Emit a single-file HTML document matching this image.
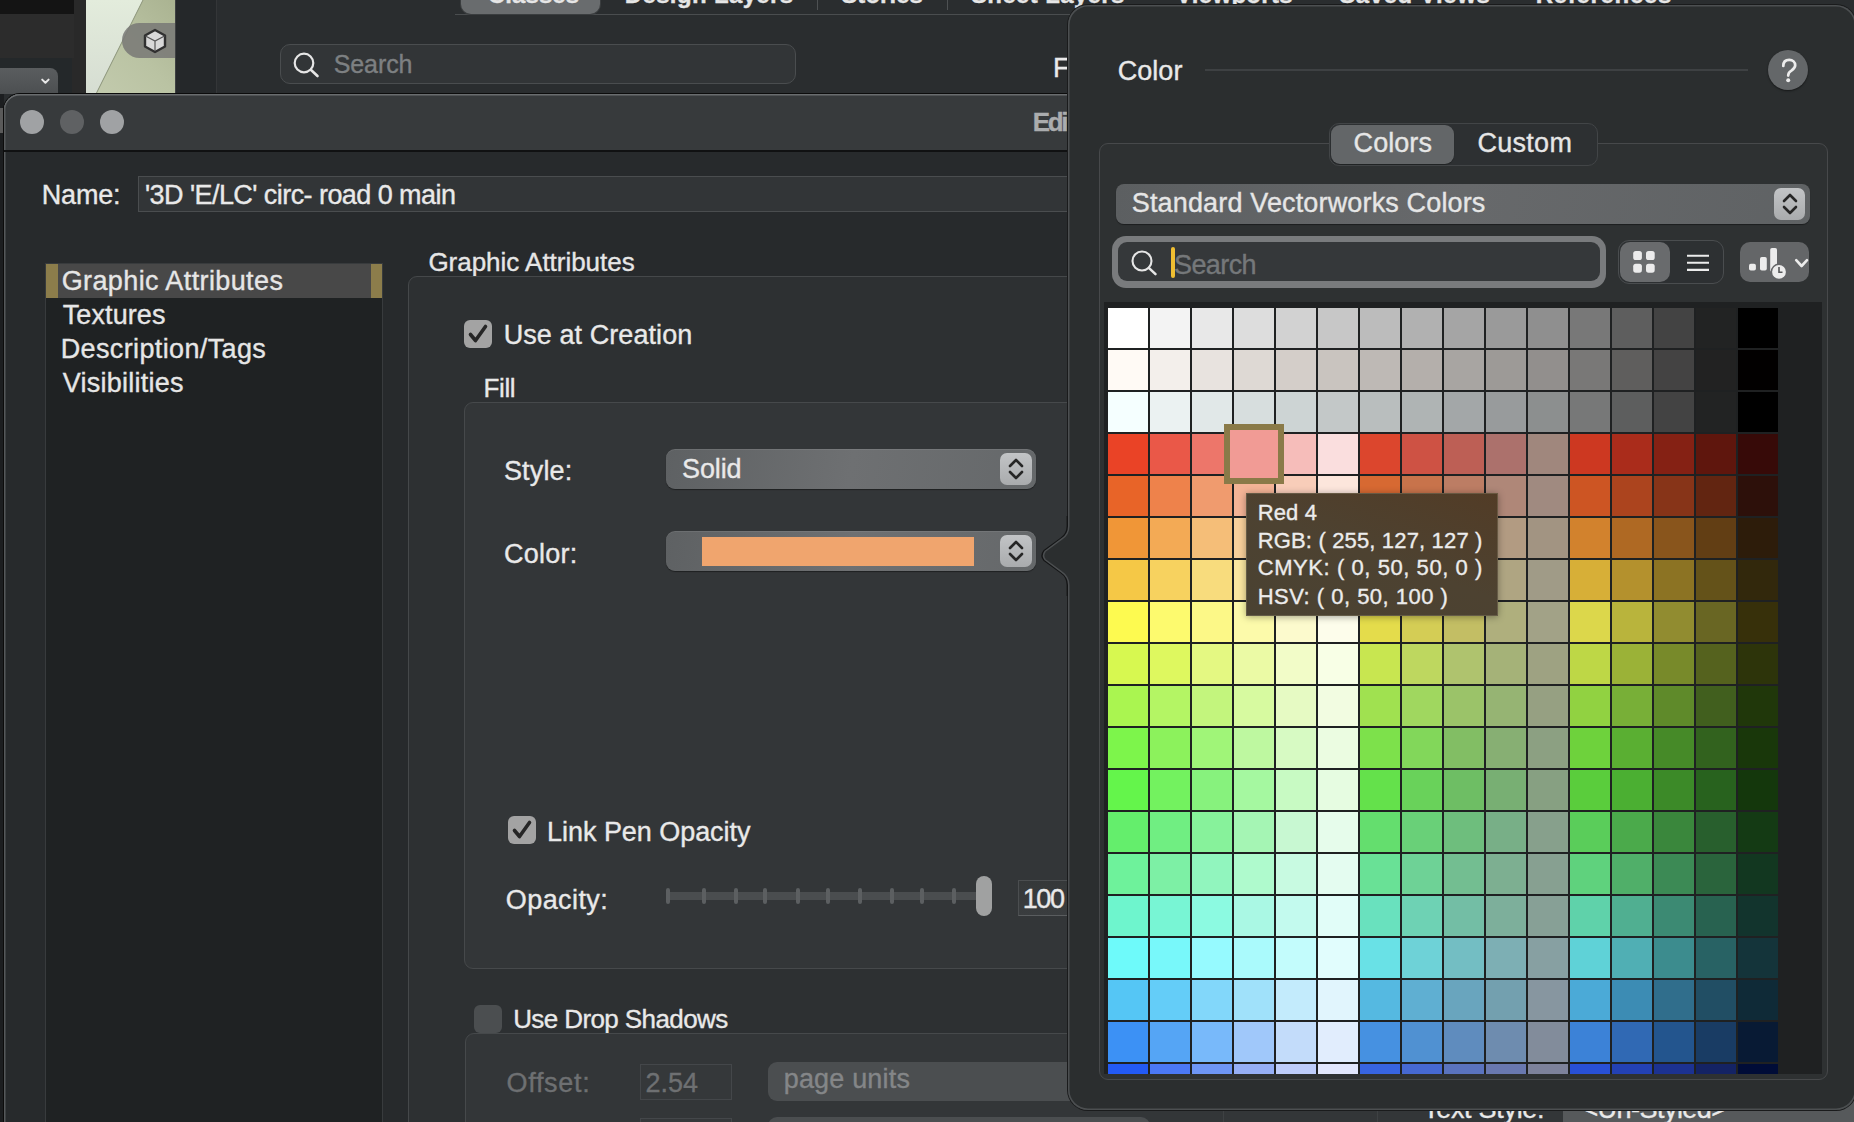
<!DOCTYPE html><html><head><meta charset="utf-8"><style>
html,body{margin:0;padding:0}
body{width:1854px;height:1122px;overflow:hidden;position:relative;background:#2a2d2f;font-family:"Liberation Sans",sans-serif;color:#e1e1e1}
.a{position:absolute}
.t{position:absolute;white-space:nowrap;-webkit-text-stroke:0.35px currentColor}
.grid{position:absolute;left:1104px;top:302px;width:718px;height:772px;background:#1f2122;overflow:hidden}
.grid i{position:absolute;width:40px;display:block}
</style></head><body>
<div class="a" style="left:0.0px;top:0.0px;width:74.0px;height:14.0px;background:#141414"></div>
<div class="a" style="left:0.0px;top:14.0px;width:74.0px;height:44.0px;background:#2c2c2c"></div>
<div class="a" style="left:0.0px;top:58.0px;width:72.0px;height:36.0px;background:#24282a"></div>
<div class="a" style="left:72.0px;top:0.0px;width:14.0px;height:94.0px;background:#292929"></div>
<div class="a" style="left:0.0px;top:0.0px;width:74.0px;height:14.0px;background:#141414"></div>
<div class="a" style="left:0.0px;top:14.0px;width:74.0px;height:44.0px;background:#2c2c2c"></div>
<div class="a" style="left:0.0px;top:68.0px;width:58.0px;height:26.0px;background:linear-gradient(#5a5d5f,#4c4f51);border-radius:0 8px 0 0"></div>
<svg class="a" style="left:38px;top:76px" width="14" height="10"><path d="M4.2 3.6 L7.4 6.8 L10.6 3.6" stroke="#e8e8e8" stroke-width="2" fill="none" stroke-linecap="round" stroke-linejoin="round"/></svg>
<svg class="a" style="left:86px;top:0px" width="89" height="94"><defs><linearGradient id="g1" x1="1" y1="0" x2="0" y2="1"><stop offset="0" stop-color="#aab391"/><stop offset="0.5" stop-color="#bac3a3"/><stop offset="1" stop-color="#c3cbae"/></linearGradient><linearGradient id="g2" x1="0" y1="0" x2="0" y2="1"><stop offset="0" stop-color="#e3ecdc"/><stop offset="1" stop-color="#d6ddd2"/></linearGradient></defs><rect width="89" height="94" fill="url(#g1)"/><polygon points="0,0 57,0 10,94 0,94" fill="url(#g2)"/><line x1="57" y1="0" x2="10" y2="94" stroke="#8a9378" stroke-width="1"/></svg>
<div class="a" style="left:122.0px;top:23.0px;width:60.0px;height:35.0px;background:rgba(120,120,118,0.85);border-radius:18px 0 0 18px"></div>
<svg class="a" style="left:143px;top:28px" width="24" height="26"><polygon points="12,2 22,7.5 22,18.5 12,24 2,18.5 2,7.5" fill="#d8d8d8" stroke="#303030" stroke-width="2.4" stroke-linejoin="round"/><path d="M2.5 8 L12 13 L21.5 8 M12 13 L12 23" stroke="#555" stroke-width="1.2" fill="none"/></svg>
<div class="a" style="left:175.0px;top:0.0px;width:1.0px;height:94.0px;background:#3e4042"></div>
<div class="a" style="left:176.0px;top:0.0px;width:40.0px;height:94.0px;background:#25282a"></div>
<div class="a" style="left:216.0px;top:0.0px;width:1.0px;height:94.0px;background:#343638"></div>
<div class="a" style="left:455.0px;top:14.0px;width:1400.0px;height:1.0px;background:#4a4d4f"></div>
<div class="a" style="left:461.0px;top:-12.0px;width:139.0px;height:26.0px;background:#696c6e;border-radius:0 0 10px 10px;box-shadow:0 0 0 1px #3a3d3f"></div>
<div class="t" style="left:487.8px;top:-17.1px;font-size:24.0px;line-height:24.0px;color:#e6e6e6;font-weight:bold;letter-spacing:0.10px;">Classes</div>
<div class="t" style="left:624.8px;top:-17.1px;font-size:24.0px;line-height:24.0px;color:#e6e6e6;font-weight:bold;letter-spacing:0.35px;">Design Layers</div>
<div class="t" style="left:841.3px;top:-17.1px;font-size:24.0px;line-height:24.0px;color:#e6e6e6;font-weight:bold;letter-spacing:0.05px;">Stories</div>
<div class="t" style="left:971.0px;top:-17.1px;font-size:24.0px;line-height:24.0px;color:#e6e6e6;font-weight:bold;letter-spacing:0.36px;">Sheet Layers</div>
<div class="t" style="left:1175.9px;top:-17.1px;font-size:24.0px;line-height:24.0px;color:#e6e6e6;font-weight:bold;letter-spacing:0.31px;">Viewports</div>
<div class="t" style="left:1339.3px;top:-17.1px;font-size:24.0px;line-height:24.0px;color:#e6e6e6;font-weight:bold;letter-spacing:0.55px;">Saved Views</div>
<div class="t" style="left:1535.7px;top:-17.1px;font-size:24.0px;line-height:24.0px;color:#e6e6e6;font-weight:bold;letter-spacing:0.70px;">References</div>
<div class="a" style="left:817.0px;top:0.0px;width:1.0px;height:10.0px;background:#4e5153"></div>
<div class="a" style="left:947.0px;top:0.0px;width:1.0px;height:10.0px;background:#4e5153"></div>
<div class="a" style="left:280.0px;top:44.0px;width:516.0px;height:40.0px;background:#323537;border:1px solid #4a4d4f;border-radius:10px;box-sizing:border-box"></div>
<svg class="a" style="left:290px;top:49px" width="32" height="32"><circle cx="14" cy="14" r="9.3" stroke="#e6e6e6" stroke-width="2.2" fill="none"/><line x1="20.8" y1="20.8" x2="27.5" y2="27" stroke="#e6e6e6" stroke-width="2.6" stroke-linecap="round"/></svg>
<div class="t" style="left:333.7px;top:51.8px;font-size:25.0px;line-height:25.0px;color:#7d8082;font-weight:normal;letter-spacing:-0.08px;">Search</div>
<div class="t" style="left:1053.0px;top:54.5px;font-size:27.0px;line-height:27.0px;color:#e9e9e9;font-weight:normal;">F</div>
<div class="a" style="left:0.0px;top:94.0px;width:4.0px;height:1028.0px;background:#1c1e20"></div>
<div class="a" style="left:0.0px;top:108.0px;width:3.5px;height:25.0px;background:#5a5a5a"></div>
<div class="a" style="left:3.0px;top:93.0px;width:1900.0px;height:1100.0px;background:#0c0c0c;border-radius:17px 0 0 0"></div>
<div class="a" style="left:4.0px;top:94.0px;width:1900.0px;height:1100.0px;background:#272a2c;border-radius:16px 0 0 0;box-shadow:inset 0 1px 0 #5a5d5f, inset 1.5px 0 0 #55585a"></div>
<div class="a" style="left:4.0px;top:94.0px;width:1900.0px;height:56.0px;background:#373a3c;border-radius:16px 0 0 0;box-shadow:inset 0 1.5px 0 #6a6d6f, inset 1.5px 0 0 #55585a"></div>
<div class="a" style="left:4.0px;top:150.0px;width:1900.0px;height:2.0px;background:#101112"></div>
<div class="a" style="left:20.0px;top:110.0px;width:24.0px;height:24.0px;background:#a0a2a4;border-radius:50%"></div>
<div class="a" style="left:60.0px;top:110.0px;width:24.0px;height:24.0px;background:#5f6163;border-radius:50%"></div>
<div class="a" style="left:100.0px;top:110.0px;width:24.0px;height:24.0px;background:#a0a2a4;border-radius:50%"></div>
<div class="t" style="left:1032.7px;top:109.0px;font-size:26.0px;line-height:26.0px;color:#aaacae;font-weight:bold;letter-spacing:-2.35px;">Edi</div>
<div class="t" style="left:41.8px;top:181.9px;font-size:27.0px;line-height:27.0px;color:#e9e9e9;font-weight:normal;letter-spacing:-0.19px;">Name:</div>
<div class="a" style="left:138.0px;top:176.0px;width:1000.0px;height:36.0px;background:#323537;border:1px solid #4a4d4f;box-sizing:border-box"></div>
<div class="t" style="left:145.0px;top:181.9px;font-size:27.0px;line-height:27.0px;color:#e9e9e9;font-weight:normal;letter-spacing:-0.56px;">'3D 'E/LC' circ- road 0 main</div>
<div class="a" style="left:45.0px;top:263.0px;width:338.0px;height:900.0px;background:#1f2223;border:1px solid #383b3d;box-sizing:border-box"></div>
<div class="a" style="left:46.0px;top:264.0px;width:336.0px;height:34.0px;background:#484848"></div>
<div class="a" style="left:46.0px;top:264.0px;width:12.0px;height:34.0px;background:#8c7d4b"></div>
<div class="a" style="left:371.0px;top:264.0px;width:11.0px;height:34.0px;background:#8c7d4b"></div>
<div class="t" style="left:61.7px;top:268.4px;font-size:27.0px;line-height:27.0px;color:#e6e6e6;font-weight:normal;letter-spacing:0.39px;">Graphic Attributes</div>
<div class="t" style="left:62.7px;top:302.3px;font-size:27.0px;line-height:27.0px;color:#e6e6e6;font-weight:normal;letter-spacing:0.11px;">Textures</div>
<div class="t" style="left:60.7px;top:336.2px;font-size:27.0px;line-height:27.0px;color:#e6e6e6;font-weight:normal;letter-spacing:0.37px;">Description/Tags</div>
<div class="t" style="left:62.7px;top:370.1px;font-size:27.0px;line-height:27.0px;color:#e6e6e6;font-weight:normal;letter-spacing:0.25px;">Visibilities</div>
<div class="t" style="left:428.4px;top:249.2px;font-size:26.0px;line-height:26.0px;color:#e6e6e6;font-weight:normal;letter-spacing:-0.02px;">Graphic Attributes</div>
<div class="a" style="left:408.0px;top:276.0px;width:1200.0px;height:900.0px;background:#2d3032;border:1px solid #45484a;border-radius:9px;box-sizing:border-box"></div>
<div class="a" style="left:464.0px;top:320.0px;width:28.0px;height:28.0px;background:#a3a3a3;border-radius:6px"></div><svg class="a" style="left:464px;top:320px" width="28" height="28"><path d="M6.5 14.5 L11.5 20.5 L21.5 6.5" stroke="#262626" stroke-width="3.6" fill="none" stroke-linecap="round" stroke-linejoin="round"/></svg>
<div class="t" style="left:503.7px;top:322.4px;font-size:27.0px;line-height:27.0px;color:#e9e9e9;font-weight:normal;letter-spacing:0.07px;">Use at Creation</div>
<div class="t" style="left:483.6px;top:374.8px;font-size:26.0px;line-height:26.0px;color:#e9e9e9;font-weight:normal;letter-spacing:-0.40px;">Fill</div>
<div class="a" style="left:464.0px;top:402.0px;width:1200.0px;height:567.0px;background:#333638;border:1px solid #46494b;border-radius:9px;box-sizing:border-box"></div>
<div class="t" style="left:503.9px;top:458.4px;font-size:27.0px;line-height:27.0px;color:#e9e9e9;font-weight:normal;letter-spacing:0.18px;">Style:</div>
<div class="a" style="left:666.0px;top:449.0px;width:370.0px;height:40.0px;background:linear-gradient(100deg,#5e6163,#6e7072 50%,#65686a);border-radius:9px;box-shadow:0 1px 1px rgba(0,0,0,.4), inset 0 1px 0 rgba(255,255,255,.08)"></div><div class="a" style="left:1000.0px;top:453.0px;width:32.0px;height:32.0px;background:linear-gradient(#c2c4c6,#a9abad);border-radius:7px"></div><svg class="a" style="left:1000px;top:453px" width="32" height="32"><path d="M10 13 L16 7 L22 13 M10 19 L16 25 L22 19" stroke="#262626" stroke-width="2.6" fill="none" stroke-linecap="round" stroke-linejoin="round"/></svg>
<div class="t" style="left:682.0px;top:455.5px;font-size:27.0px;line-height:27.0px;color:#e9e9e9;font-weight:normal;letter-spacing:-0.12px;">Solid</div>
<div class="t" style="left:503.9px;top:540.5px;font-size:27.0px;line-height:27.0px;color:#e9e9e9;font-weight:normal;letter-spacing:0.26px;">Color:</div>
<div class="a" style="left:666.0px;top:531.0px;width:370.0px;height:40.0px;background:linear-gradient(100deg,#5e6163,#6e7072 50%,#65686a);border-radius:9px;box-shadow:0 1px 1px rgba(0,0,0,.4), inset 0 1px 0 rgba(255,255,255,.08)"></div><div class="a" style="left:1000.0px;top:535.0px;width:32.0px;height:32.0px;background:linear-gradient(#c2c4c6,#a9abad);border-radius:7px"></div><svg class="a" style="left:1000px;top:535px" width="32" height="32"><path d="M10 13 L16 7 L22 13 M10 19 L16 25 L22 19" stroke="#262626" stroke-width="2.6" fill="none" stroke-linecap="round" stroke-linejoin="round"/></svg>
<div class="a" style="left:702.0px;top:536.5px;width:272.0px;height:29.0px;background:#f0a56e"></div>
<div class="a" style="left:508.0px;top:816.0px;width:28.0px;height:28.0px;background:#a3a3a3;border-radius:6px"></div><svg class="a" style="left:508px;top:816px" width="28" height="28"><path d="M6.5 14.5 L11.5 20.5 L21.5 6.5" stroke="#262626" stroke-width="3.6" fill="none" stroke-linecap="round" stroke-linejoin="round"/></svg>
<div class="t" style="left:547.1px;top:818.5px;font-size:27.0px;line-height:27.0px;color:#e9e9e9;font-weight:normal;letter-spacing:-0.05px;">Link Pen Opacity</div>
<div class="t" style="left:505.8px;top:886.5px;font-size:27.0px;line-height:27.0px;color:#e9e9e9;font-weight:normal;letter-spacing:0.41px;">Opacity:</div>
<div class="a" style="left:666.0px;top:892.3px;width:318.0px;height:7.6px;background:#4a4d4f;border-radius:4px"></div>
<div class="a" style="left:666.0px;top:888.2px;width:4.0px;height:15.8px;background:#5c5f61;border-radius:2px"></div>
<div class="a" style="left:702.0px;top:888.2px;width:4.0px;height:15.8px;background:#5c5f61;border-radius:2px"></div>
<div class="a" style="left:734.0px;top:888.2px;width:4.0px;height:15.8px;background:#5c5f61;border-radius:2px"></div>
<div class="a" style="left:763.4px;top:888.2px;width:4.0px;height:15.8px;background:#5c5f61;border-radius:2px"></div>
<div class="a" style="left:795.5px;top:888.2px;width:4.0px;height:15.8px;background:#5c5f61;border-radius:2px"></div>
<div class="a" style="left:825.7px;top:888.2px;width:4.0px;height:15.8px;background:#5c5f61;border-radius:2px"></div>
<div class="a" style="left:857.8px;top:888.2px;width:4.0px;height:15.8px;background:#5c5f61;border-radius:2px"></div>
<div class="a" style="left:889.9px;top:888.2px;width:4.0px;height:15.8px;background:#5c5f61;border-radius:2px"></div>
<div class="a" style="left:919.7px;top:888.2px;width:4.0px;height:15.8px;background:#5c5f61;border-radius:2px"></div>
<div class="a" style="left:951.8px;top:888.2px;width:4.0px;height:15.8px;background:#5c5f61;border-radius:2px"></div>
<div class="a" style="left:975.8px;top:875.8px;width:16.3px;height:40.3px;background:#a0a1a1;border-radius:8px"></div>
<div class="a" style="left:1018.0px;top:880.4px;width:60.0px;height:35.4px;background:linear-gradient(#353839,#3a3d3f);border:1px solid #4b4e50;border-bottom-color:#5a5d5f;box-sizing:border-box"></div>
<div class="t" style="left:1022.7px;top:886.1px;font-size:27.0px;line-height:27.0px;color:#e9e9e9;font-weight:normal;letter-spacing:-1.35px;">100</div>
<div class="a" style="left:474.4px;top:1004.6px;width:28.0px;height:28.0px;background:#4b4e50;border-radius:6px"></div>
<div class="t" style="left:513.2px;top:1006.1px;font-size:26.0px;line-height:26.0px;color:#e9e9e9;font-weight:normal;letter-spacing:-0.60px;">Use Drop Shadows</div>
<div class="a" style="left:465.0px;top:1033.0px;width:1200.0px;height:200.0px;background:#333638;border:1px solid #46494b;border-radius:9px;box-sizing:border-box"></div>
<div class="t" style="left:506.6px;top:1070.1px;font-size:27.0px;line-height:27.0px;color:#6e7072;font-weight:normal;letter-spacing:0.67px;">Offset:</div>
<div class="a" style="left:640.0px;top:1064.0px;width:92.0px;height:36.0px;background:#35383a;border:1px solid #44474a;box-sizing:border-box"></div>
<div class="t" style="left:645.5px;top:1070.1px;font-size:27.0px;line-height:27.0px;color:#6e7072;font-weight:normal;">2.54</div>
<div class="a" style="left:768.0px;top:1061.5px;width:382.0px;height:39.0px;background:#4b4e50;border-radius:9px"></div>
<div class="t" style="left:783.7px;top:1066.1px;font-size:27.0px;line-height:27.0px;color:#848688;font-weight:normal;letter-spacing:0.18px;">page units</div>
<div class="a" style="left:640.0px;top:1118.0px;width:92.0px;height:36.0px;background:#35383a;border:1px solid #44474a;box-sizing:border-box"></div>
<div class="a" style="left:768.0px;top:1117.0px;width:382.0px;height:39.0px;background:#4b4e50;border-radius:9px"></div>
<div class="a" style="left:1223.0px;top:1100.0px;width:1.0px;height:30.0px;background:#3e4143"></div>
<div class="a" style="left:1377.0px;top:1100.0px;width:1.0px;height:30.0px;background:#3e4143"></div>
<div class="t" style="left:1423.0px;top:1095.6px;font-size:27.0px;line-height:27.0px;color:#e9e9e9;font-weight:normal;letter-spacing:-0.30px;">Text Style:</div>
<div class="a" style="left:1563.0px;top:1098.0px;width:400.0px;height:40.0px;background:#56595b;border-radius:9px"></div>
<div class="t" style="left:1582.4px;top:1095.6px;font-size:27.0px;line-height:27.0px;color:#e9e9e9;font-weight:normal;letter-spacing:-0.54px;">&lt;Un-Styled&gt;</div>
<div class="a" style="left:1067.0px;top:4.0px;width:790.0px;height:1107.0px;background:#1a1b1c;border-radius:21px"></div>
<div class="a" style="left:1068.0px;top:5.0px;width:788.0px;height:1105.0px;background:#2b2e2f;border-radius:20px;box-shadow:inset 0 0 0 1.5px #4c4f51"></div>
<svg class="a" style="left:1038px;top:516px" width="36" height="80"><path d="M29.6 0 L29.6 10 Q29.6 18 23.1 22.5 L6.1 35 Q2.6 39.5 6.1 44 L23.1 56.5 Q29.6 61 29.6 69 L29.6 80 L36 80 L36 0 Z" fill="#2b2e2f" stroke="none"/><path d="M29.6 0 L29.6 10 Q29.6 18 23.1 22.5 L6.1 35 Q2.6 39.5 6.1 44 L23.1 56.5 Q29.6 61 29.6 69 L29.6 80" fill="none" stroke="#141516" stroke-width="2"/><path d="M30.75 0 L30.75 10 Q30.75 18.2 24.2 22.7 L7.2 35.2 Q3.9 39.5 7.2 43.8 L24.2 56.3 Q30.75 60.8 30.75 69 L30.75 80" fill="none" stroke="#4c4f51" stroke-width="1.5"/></svg>
<div class="t" style="left:1117.7px;top:58.2px;font-size:27.0px;line-height:27.0px;color:#e9e9e9;font-weight:normal;letter-spacing:0.05px;">Color</div>
<div class="a" style="left:1205.0px;top:69.0px;width:543.0px;height:1.5px;background:#3e4143"></div>
<div class="a" style="left:1768.0px;top:50.0px;width:40.0px;height:40.0px;background:#646769;border-radius:50%;box-shadow:0 1px 2px rgba(0,0,0,.5)"></div>
<svg class="a" style="left:1768px;top:50px" width="40" height="40"><path d="M15.3 16 C15.3 12 17.8 9.9 21.2 9.9 C24.8 9.9 27.2 12.3 27.2 15.3 C27.2 18.3 25 19.5 23 20.8 C21 22 20.2 23 20.2 25.6" stroke="#ececec" stroke-width="2.7" fill="none" stroke-linecap="round"/><circle cx="20.2" cy="30.2" r="2" fill="#ececec"/></svg>
<div class="a" style="left:1098.5px;top:142.5px;width:729.0px;height:937.0px;background:#2e3132;border:1.5px solid #47494b;border-radius:9px;box-sizing:border-box"></div>
<div class="a" style="left:1329.0px;top:123.0px;width:268.5px;height:43.0px;background:#2d3032;border:1px solid #424547;border-radius:10px;box-sizing:border-box"></div>
<div class="a" style="left:1330.7px;top:124.6px;width:123.3px;height:39.4px;background:#636668;border-radius:9px;box-shadow:0 1px 1px rgba(0,0,0,.3)"></div>
<div class="t" style="left:1353.6px;top:130.1px;font-size:27.0px;line-height:27.0px;color:#e6e6e6;font-weight:normal;letter-spacing:0.06px;">Colors</div>
<div class="t" style="left:1477.4px;top:130.1px;font-size:27.0px;line-height:27.0px;color:#e6e6e6;font-weight:normal;letter-spacing:0.30px;">Custom</div>
<div class="a" style="left:1116.0px;top:184.0px;width:694.0px;height:39.6px;background:linear-gradient(100deg,#5c5f61,#67696b 50%,#5f6264);border-radius:8px;box-shadow:0 1px 1px rgba(0,0,0,.4)"></div>
<div class="a" style="left:1774.3px;top:188.4px;width:31.0px;height:31.7px;background:linear-gradient(#c2c4c6,#a9abad);border-radius:7px"></div>
<svg class="a" style="left:1774px;top:188px" width="32" height="32"><path d="M10 13 L16 7 L22 13 M10 19 L16 25 L22 19" stroke="#262626" stroke-width="2.6" fill="none" stroke-linecap="round" stroke-linejoin="round"/></svg>
<div class="t" style="left:1131.8px;top:190.1px;font-size:27.0px;line-height:27.0px;color:#e6e6e6;font-weight:normal;letter-spacing:0.15px;">Standard Vectorworks Colors</div>
<div class="a" style="left:1112.0px;top:236.4px;width:494.0px;height:51.3px;background:#797b7d;border-radius:14px"></div>
<div class="a" style="left:1118.0px;top:242.3px;width:482.0px;height:39.2px;background:#35383a;border-radius:9px"></div>
<svg class="a" style="left:1128px;top:246px" width="32" height="32"><circle cx="14" cy="15" r="9.5" stroke="#e6e6e6" stroke-width="2.1" fill="none"/><line x1="20.8" y1="21.8" x2="27.5" y2="28.2" stroke="#e6e6e6" stroke-width="2.5" stroke-linecap="round"/></svg>
<div class="a" style="left:1171.0px;top:246.8px;width:3.5px;height:31.2px;background:#f0bf32;border-radius:2px"></div>
<div class="t" style="left:1174.0px;top:251.6px;font-size:27.0px;line-height:27.0px;color:#75787a;font-weight:normal;letter-spacing:-0.60px;">Search</div>
<div class="a" style="left:1618.2px;top:240.0px;width:105.6px;height:43.8px;background:#2d3032;border:1px solid #4a4d4f;border-radius:11px;box-sizing:border-box"></div>
<div class="a" style="left:1619.6px;top:241.9px;width:50.4px;height:40.4px;background:#696b6d;border-radius:10px"></div>
<svg class="a" style="left:1630px;top:248px" width="28" height="28"><rect x="3.2" y="3" width="8.7" height="9" rx="2.6" fill="#ececec"/><rect x="16" y="3" width="8.7" height="9" rx="2.6" fill="#ececec"/><rect x="3.2" y="15.7" width="8.7" height="9" rx="2.6" fill="#ececec"/><rect x="16" y="15.7" width="8.7" height="9" rx="2.6" fill="#ececec"/></svg>
<svg class="a" style="left:1684px;top:248px" width="28" height="28"><path d="M3 7.8 H25 M3 14.8 H25 M3 21.9 H25" stroke="#ececec" stroke-width="2.1"/></svg>
<div class="a" style="left:1740.2px;top:241.9px;width:69.3px;height:40.2px;background:#646668;border-radius:10px"></div>
<svg class="a" style="left:1740px;top:240px" width="70" height="44"><rect x="9" y="23.7" width="6.9" height="6.8" rx="1.8" fill="#ececec"/><rect x="20" y="17" width="6.8" height="13.5" rx="1.8" fill="#ececec"/><rect x="30.2" y="7.9" width="6.8" height="24" rx="1.8" fill="#ececec"/><circle cx="39" cy="31.9" r="8.3" fill="#646668"/><circle cx="39" cy="31.9" r="6.9" fill="#ececec"/><path d="M39 27 V32.3 H42.5" stroke="#555759" stroke-width="1.6" fill="none"/><path d="M56.2 20.2 L61.6 26 L67 20.2" stroke="#ececec" stroke-width="2.6" fill="none" stroke-linecap="round" stroke-linejoin="round"/></svg>
<div class="grid"><i style="left:4px;top:6px;height:40px;background:#ffffff"></i>
<i style="left:46px;top:6px;height:40px;background:#f3f3f3"></i>
<i style="left:88px;top:6px;height:40px;background:#e8e8e8"></i>
<i style="left:130px;top:6px;height:40px;background:#dddddd"></i>
<i style="left:172px;top:6px;height:40px;background:#d2d2d2"></i>
<i style="left:214px;top:6px;height:40px;background:#c7c7c7"></i>
<i style="left:256px;top:6px;height:40px;background:#bcbcbc"></i>
<i style="left:298px;top:6px;height:40px;background:#b1b1b1"></i>
<i style="left:340px;top:6px;height:40px;background:#a5a5a5"></i>
<i style="left:382px;top:6px;height:40px;background:#9a9a9a"></i>
<i style="left:424px;top:6px;height:40px;background:#8f8f8f"></i>
<i style="left:466px;top:6px;height:40px;background:#787878"></i>
<i style="left:508px;top:6px;height:40px;background:#5e5e5e"></i>
<i style="left:550px;top:6px;height:40px;background:#434343"></i>
<i style="left:592px;top:6px;height:40px;background:#222323"></i>
<i style="left:634px;top:6px;height:40px;background:#000000"></i>
<i style="left:4px;top:48px;height:40px;background:#fffaf5"></i>
<i style="left:46px;top:48px;height:40px;background:#f3efeb"></i>
<i style="left:88px;top:48px;height:40px;background:#e8e3df"></i>
<i style="left:130px;top:48px;height:40px;background:#ded9d4"></i>
<i style="left:172px;top:48px;height:40px;background:#d4cec9"></i>
<i style="left:214px;top:48px;height:40px;background:#c9c4bf"></i>
<i style="left:256px;top:48px;height:40px;background:#beb9b5"></i>
<i style="left:298px;top:48px;height:40px;background:#b4afab"></i>
<i style="left:340px;top:48px;height:40px;background:#a8a5a2"></i>
<i style="left:382px;top:48px;height:40px;background:#9d9a97"></i>
<i style="left:424px;top:48px;height:40px;background:#928f8d"></i>
<i style="left:466px;top:48px;height:40px;background:#797877"></i>
<i style="left:508px;top:48px;height:40px;background:#5f5e5d"></i>
<i style="left:550px;top:48px;height:40px;background:#444343"></i>
<i style="left:592px;top:48px;height:40px;background:#222222"></i>
<i style="left:634px;top:48px;height:40px;background:#020000"></i>
<i style="left:4px;top:90px;height:40px;background:#f5ffff"></i>
<i style="left:46px;top:90px;height:40px;background:#ebf2f2"></i>
<i style="left:88px;top:90px;height:40px;background:#e1e8e8"></i>
<i style="left:130px;top:90px;height:40px;background:#d7dede"></i>
<i style="left:172px;top:90px;height:40px;background:#cdd4d4"></i>
<i style="left:214px;top:90px;height:40px;background:#c3c8c8"></i>
<i style="left:256px;top:90px;height:40px;background:#b9bebe"></i>
<i style="left:298px;top:90px;height:40px;background:#afb4b4"></i>
<i style="left:340px;top:90px;height:40px;background:#a3a7a8"></i>
<i style="left:382px;top:90px;height:40px;background:#989b9c"></i>
<i style="left:424px;top:90px;height:40px;background:#8c8f8f"></i>
<i style="left:466px;top:90px;height:40px;background:#777878"></i>
<i style="left:508px;top:90px;height:40px;background:#5d5e5e"></i>
<i style="left:550px;top:90px;height:40px;background:#434343"></i>
<i style="left:592px;top:90px;height:40px;background:#222323"></i>
<i style="left:634px;top:90px;height:40px;background:#000000"></i>
<i style="left:4px;top:132px;height:40px;background:#ea4326"></i>
<i style="left:46px;top:132px;height:40px;background:#ea5848"></i>
<i style="left:88px;top:132px;height:40px;background:#ed766a"></i>
<i style="left:130px;top:132px;height:40px;background:#f19b95"></i>
<i style="left:172px;top:132px;height:40px;background:#f6bdba"></i>
<i style="left:214px;top:132px;height:40px;background:#fadede"></i>
<i style="left:256px;top:132px;height:40px;background:#dc462d"></i>
<i style="left:298px;top:132px;height:40px;background:#ce5244"></i>
<i style="left:340px;top:132px;height:40px;background:#bd5f55"></i>
<i style="left:382px;top:132px;height:40px;background:#ac716c"></i>
<i style="left:424px;top:132px;height:40px;background:#a0877d"></i>
<i style="left:466px;top:132px;height:40px;background:#cd3821"></i>
<i style="left:508px;top:132px;height:40px;background:#aa2c1b"></i>
<i style="left:550px;top:132px;height:40px;background:#852114"></i>
<i style="left:592px;top:132px;height:40px;background:#5f160d"></i>
<i style="left:634px;top:132px;height:40px;background:#370a08"></i>
<i style="left:4px;top:174px;height:40px;background:#e86428"></i>
<i style="left:46px;top:174px;height:40px;background:#ee824b"></i>
<i style="left:88px;top:174px;height:40px;background:#f09b6e"></i>
<i style="left:130px;top:174px;height:40px;background:#f4b496"></i>
<i style="left:172px;top:174px;height:40px;background:#f8cdb9"></i>
<i style="left:214px;top:174px;height:40px;background:#fce6dc"></i>
<i style="left:256px;top:174px;height:40px;background:#d76932"></i>
<i style="left:298px;top:174px;height:40px;background:#c8734b"></i>
<i style="left:340px;top:174px;height:40px;background:#bc7d64"></i>
<i style="left:382px;top:174px;height:40px;background:#af8778"></i>
<i style="left:424px;top:174px;height:40px;background:#a08a80"></i>
<i style="left:466px;top:174px;height:40px;background:#cd5523"></i>
<i style="left:508px;top:174px;height:40px;background:#ac441e"></i>
<i style="left:550px;top:174px;height:40px;background:#873418"></i>
<i style="left:592px;top:174px;height:40px;background:#622511"></i>
<i style="left:634px;top:174px;height:40px;background:#2d100a"></i>
<i style="left:4px;top:216px;height:40px;background:#f09637"></i>
<i style="left:46px;top:216px;height:40px;background:#f3aa55"></i>
<i style="left:88px;top:216px;height:40px;background:#f5be78"></i>
<i style="left:130px;top:216px;height:40px;background:#f8d09b"></i>
<i style="left:172px;top:216px;height:40px;background:#fae1be"></i>
<i style="left:214px;top:216px;height:40px;background:#fcf0e1"></i>
<i style="left:256px;top:216px;height:40px;background:#dc9646"></i>
<i style="left:298px;top:216px;height:40px;background:#cd9b5a"></i>
<i style="left:340px;top:216px;height:40px;background:#be9b6e"></i>
<i style="left:382px;top:216px;height:40px;background:#b29b82"></i>
<i style="left:424px;top:216px;height:40px;background:#a29482"></i>
<i style="left:466px;top:216px;height:40px;background:#d2822d"></i>
<i style="left:508px;top:216px;height:40px;background:#af6923"></i>
<i style="left:550px;top:216px;height:40px;background:#89551c"></i>
<i style="left:592px;top:216px;height:40px;background:#623e14"></i>
<i style="left:634px;top:216px;height:40px;background:#2d1c0a"></i>
<i style="left:4px;top:258px;height:40px;background:#f5c846"></i>
<i style="left:46px;top:258px;height:40px;background:#f7d25f"></i>
<i style="left:88px;top:258px;height:40px;background:#f8dc7d"></i>
<i style="left:130px;top:258px;height:40px;background:#fae6a0"></i>
<i style="left:172px;top:258px;height:40px;background:#fceec3"></i>
<i style="left:214px;top:258px;height:40px;background:#fdf8e1"></i>
<i style="left:256px;top:258px;height:40px;background:#d7b955"></i>
<i style="left:298px;top:258px;height:40px;background:#c8b469"></i>
<i style="left:340px;top:258px;height:40px;background:#bcaf78"></i>
<i style="left:382px;top:258px;height:40px;background:#afa582"></i>
<i style="left:424px;top:258px;height:40px;background:#a09b87"></i>
<i style="left:466px;top:258px;height:40px;background:#d7af37"></i>
<i style="left:508px;top:258px;height:40px;background:#b4912d"></i>
<i style="left:550px;top:258px;height:40px;background:#8c7323"></i>
<i style="left:592px;top:258px;height:40px;background:#645219"></i>
<i style="left:634px;top:258px;height:40px;background:#32280c"></i>
<i style="left:4px;top:300px;height:40px;background:#fdfa50"></i>
<i style="left:46px;top:300px;height:40px;background:#fdfa6e"></i>
<i style="left:88px;top:300px;height:40px;background:#fcf887"></i>
<i style="left:130px;top:300px;height:40px;background:#fcfaaa"></i>
<i style="left:172px;top:300px;height:40px;background:#fcfacd"></i>
<i style="left:214px;top:300px;height:40px;background:#fdfdeb"></i>
<i style="left:256px;top:300px;height:40px;background:#e4dc4b"></i>
<i style="left:298px;top:300px;height:40px;background:#d4cd55"></i>
<i style="left:340px;top:300px;height:40px;background:#c3be64"></i>
<i style="left:382px;top:300px;height:40px;background:#afaf7d"></i>
<i style="left:424px;top:300px;height:40px;background:#a2a287"></i>
<i style="left:466px;top:300px;height:40px;background:#dcd74b"></i>
<i style="left:508px;top:300px;height:40px;background:#b9b43c"></i>
<i style="left:550px;top:300px;height:40px;background:#918c30"></i>
<i style="left:592px;top:300px;height:40px;background:#696623"></i>
<i style="left:634px;top:300px;height:40px;background:#37300a"></i>
<i style="left:4px;top:342px;height:40px;background:#d7f850"></i>
<i style="left:46px;top:342px;height:40px;background:#def85f"></i>
<i style="left:88px;top:342px;height:40px;background:#e4f882"></i>
<i style="left:130px;top:342px;height:40px;background:#ebfaa5"></i>
<i style="left:172px;top:342px;height:40px;background:#f2fcc8"></i>
<i style="left:214px;top:342px;height:40px;background:#f8ffe6"></i>
<i style="left:256px;top:342px;height:40px;background:#c8e650"></i>
<i style="left:298px;top:342px;height:40px;background:#bed75f"></i>
<i style="left:340px;top:342px;height:40px;background:#afc36e"></i>
<i style="left:382px;top:342px;height:40px;background:#a5b278"></i>
<i style="left:424px;top:342px;height:40px;background:#9ea282"></i>
<i style="left:466px;top:342px;height:40px;background:#bed746"></i>
<i style="left:508px;top:342px;height:40px;background:#9bb237"></i>
<i style="left:550px;top:342px;height:40px;background:#788a2a"></i>
<i style="left:592px;top:342px;height:40px;background:#55621e"></i>
<i style="left:634px;top:342px;height:40px;background:#2d340a"></i>
<i style="left:4px;top:384px;height:40px;background:#aaf550"></i>
<i style="left:46px;top:384px;height:40px;background:#b4f564"></i>
<i style="left:88px;top:384px;height:40px;background:#c3f57d"></i>
<i style="left:130px;top:384px;height:40px;background:#d7faa0"></i>
<i style="left:172px;top:384px;height:40px;background:#e6fac3"></i>
<i style="left:214px;top:384px;height:40px;background:#f2fce1"></i>
<i style="left:256px;top:384px;height:40px;background:#a0e150"></i>
<i style="left:298px;top:384px;height:40px;background:#a0d75f"></i>
<i style="left:340px;top:384px;height:40px;background:#9bc369"></i>
<i style="left:382px;top:384px;height:40px;background:#96b473"></i>
<i style="left:424px;top:384px;height:40px;background:#96a082"></i>
<i style="left:466px;top:384px;height:40px;background:#91d241"></i>
<i style="left:508px;top:384px;height:40px;background:#78af37"></i>
<i style="left:550px;top:384px;height:40px;background:#5f8a2a"></i>
<i style="left:592px;top:384px;height:40px;background:#415f1e"></i>
<i style="left:634px;top:384px;height:40px;background:#20370a"></i>
<i style="left:4px;top:426px;height:40px;background:#7df54b"></i>
<i style="left:46px;top:426px;height:40px;background:#8cf25c"></i>
<i style="left:88px;top:426px;height:40px;background:#a0f578"></i>
<i style="left:130px;top:426px;height:40px;background:#bef8a0"></i>
<i style="left:172px;top:426px;height:40px;background:#d7fac3"></i>
<i style="left:214px;top:426px;height:40px;background:#ebfce1"></i>
<i style="left:256px;top:426px;height:40px;background:#7de14b"></i>
<i style="left:298px;top:426px;height:40px;background:#82d75a"></i>
<i style="left:340px;top:426px;height:40px;background:#82be64"></i>
<i style="left:382px;top:426px;height:40px;background:#87af73"></i>
<i style="left:424px;top:426px;height:40px;background:#8ca082"></i>
<i style="left:466px;top:426px;height:40px;background:#6ed23c"></i>
<i style="left:508px;top:426px;height:40px;background:#5aaf32"></i>
<i style="left:550px;top:426px;height:40px;background:#468a28"></i>
<i style="left:592px;top:426px;height:40px;background:#32621e"></i>
<i style="left:634px;top:426px;height:40px;background:#19370a"></i>
<i style="left:4px;top:468px;height:40px;background:#64f54b"></i>
<i style="left:46px;top:468px;height:40px;background:#73f25f"></i>
<i style="left:88px;top:468px;height:40px;background:#87f27d"></i>
<i style="left:130px;top:468px;height:40px;background:#a5f8a0"></i>
<i style="left:172px;top:468px;height:40px;background:#c8fac3"></i>
<i style="left:214px;top:468px;height:40px;background:#e6fce1"></i>
<i style="left:256px;top:468px;height:40px;background:#64e14b"></i>
<i style="left:298px;top:468px;height:40px;background:#69d25a"></i>
<i style="left:340px;top:468px;height:40px;background:#6ebe64"></i>
<i style="left:382px;top:468px;height:40px;background:#78af73"></i>
<i style="left:424px;top:468px;height:40px;background:#87a082"></i>
<i style="left:466px;top:468px;height:40px;background:#5acd3c"></i>
<i style="left:508px;top:468px;height:40px;background:#4baf32"></i>
<i style="left:550px;top:468px;height:40px;background:#3c8a28"></i>
<i style="left:592px;top:468px;height:40px;background:#28621e"></i>
<i style="left:634px;top:468px;height:40px;background:#14370c"></i>
<i style="left:4px;top:510px;height:40px;background:#64ee6c"></i>
<i style="left:46px;top:510px;height:40px;background:#70ee82"></i>
<i style="left:88px;top:510px;height:40px;background:#87f29b"></i>
<i style="left:130px;top:510px;height:40px;background:#a5f5b4"></i>
<i style="left:172px;top:510px;height:40px;background:#c8f8d2"></i>
<i style="left:214px;top:510px;height:40px;background:#e6fceb"></i>
<i style="left:256px;top:510px;height:40px;background:#64de6e"></i>
<i style="left:298px;top:510px;height:40px;background:#69d078"></i>
<i style="left:340px;top:510px;height:40px;background:#6ebe7d"></i>
<i style="left:382px;top:510px;height:40px;background:#78af87"></i>
<i style="left:424px;top:510px;height:40px;background:#87a08c"></i>
<i style="left:466px;top:510px;height:40px;background:#5acd5a"></i>
<i style="left:508px;top:510px;height:40px;background:#4baa4b"></i>
<i style="left:550px;top:510px;height:40px;background:#3a873c"></i>
<i style="left:592px;top:510px;height:40px;background:#285f2d"></i>
<i style="left:634px;top:510px;height:40px;background:#143a14"></i>
<i style="left:4px;top:552px;height:40px;background:#6ef29b"></i>
<i style="left:46px;top:552px;height:40px;background:#7df0a5"></i>
<i style="left:88px;top:552px;height:40px;background:#91f5be"></i>
<i style="left:130px;top:552px;height:40px;background:#affacd"></i>
<i style="left:172px;top:552px;height:40px;background:#c8fae1"></i>
<i style="left:214px;top:552px;height:40px;background:#e4fcf0"></i>
<i style="left:256px;top:552px;height:40px;background:#69e196"></i>
<i style="left:298px;top:552px;height:40px;background:#6ed296"></i>
<i style="left:340px;top:552px;height:40px;background:#73be91"></i>
<i style="left:382px;top:552px;height:40px;background:#7daf91"></i>
<i style="left:424px;top:552px;height:40px;background:#87a091"></i>
<i style="left:466px;top:552px;height:40px;background:#5fd27d"></i>
<i style="left:508px;top:552px;height:40px;background:#50af69"></i>
<i style="left:550px;top:552px;height:40px;background:#3c8a55"></i>
<i style="left:592px;top:552px;height:40px;background:#2a643c"></i>
<i style="left:634px;top:552px;height:40px;background:#123720"></i>
<i style="left:4px;top:594px;height:40px;background:#6ef5cd"></i>
<i style="left:46px;top:594px;height:40px;background:#78f5d4"></i>
<i style="left:88px;top:594px;height:40px;background:#8cfae1"></i>
<i style="left:130px;top:594px;height:40px;background:#aaf8e4"></i>
<i style="left:172px;top:594px;height:40px;background:#c3faee"></i>
<i style="left:214px;top:594px;height:40px;background:#e1fdf8"></i>
<i style="left:256px;top:594px;height:40px;background:#69e1be"></i>
<i style="left:298px;top:594px;height:40px;background:#6ed2b4"></i>
<i style="left:340px;top:594px;height:40px;background:#73bea5"></i>
<i style="left:382px;top:594px;height:40px;background:#7daf9b"></i>
<i style="left:424px;top:594px;height:40px;background:#87a096"></i>
<i style="left:466px;top:594px;height:40px;background:#5fd2aa"></i>
<i style="left:508px;top:594px;height:40px;background:#50af91"></i>
<i style="left:550px;top:594px;height:40px;background:#3c8a73"></i>
<i style="left:592px;top:594px;height:40px;background:#286250"></i>
<i style="left:634px;top:594px;height:40px;background:#12342d"></i>
<i style="left:4px;top:636px;height:40px;background:#6efafa"></i>
<i style="left:46px;top:636px;height:40px;background:#78f8fa"></i>
<i style="left:88px;top:636px;height:40px;background:#96faff"></i>
<i style="left:130px;top:636px;height:40px;background:#aafafc"></i>
<i style="left:172px;top:636px;height:40px;background:#c3fcfc"></i>
<i style="left:214px;top:636px;height:40px;background:#e1fdfd"></i>
<i style="left:256px;top:636px;height:40px;background:#69e1e6"></i>
<i style="left:298px;top:636px;height:40px;background:#6ed2d7"></i>
<i style="left:340px;top:636px;height:40px;background:#73bec3"></i>
<i style="left:382px;top:636px;height:40px;background:#7dafb4"></i>
<i style="left:424px;top:636px;height:40px;background:#87a0a2"></i>
<i style="left:466px;top:636px;height:40px;background:#5fd2d7"></i>
<i style="left:508px;top:636px;height:40px;background:#50afb4"></i>
<i style="left:550px;top:636px;height:40px;background:#3c8c8e"></i>
<i style="left:592px;top:636px;height:40px;background:#286264"></i>
<i style="left:634px;top:636px;height:40px;background:#14343a"></i>
<i style="left:4px;top:678px;height:40px;background:#55c6f5"></i>
<i style="left:46px;top:678px;height:40px;background:#64cdf8"></i>
<i style="left:88px;top:678px;height:40px;background:#82d7fa"></i>
<i style="left:130px;top:678px;height:40px;background:#a0e1fa"></i>
<i style="left:172px;top:678px;height:40px;background:#c3ebfc"></i>
<i style="left:214px;top:678px;height:40px;background:#e1f5fd"></i>
<i style="left:256px;top:678px;height:40px;background:#55b9e1"></i>
<i style="left:298px;top:678px;height:40px;background:#5fafd2"></i>
<i style="left:340px;top:678px;height:40px;background:#69a5be"></i>
<i style="left:382px;top:678px;height:40px;background:#73a0af"></i>
<i style="left:424px;top:678px;height:40px;background:#8796a0"></i>
<i style="left:466px;top:678px;height:40px;background:#4baad7"></i>
<i style="left:508px;top:678px;height:40px;background:#3c8cb4"></i>
<i style="left:550px;top:678px;height:40px;background:#306e8c"></i>
<i style="left:592px;top:678px;height:40px;background:#214e64"></i>
<i style="left:634px;top:678px;height:40px;background:#0f2a37"></i>
<i style="left:4px;top:720px;height:40px;background:#3c91f5"></i>
<i style="left:46px;top:720px;height:40px;background:#55a5f5"></i>
<i style="left:88px;top:720px;height:40px;background:#78b9fa"></i>
<i style="left:130px;top:720px;height:40px;background:#a0c8fa"></i>
<i style="left:172px;top:720px;height:40px;background:#c3dcfa"></i>
<i style="left:214px;top:720px;height:40px;background:#e1edfd"></i>
<i style="left:256px;top:720px;height:40px;background:#4691e1"></i>
<i style="left:298px;top:720px;height:40px;background:#5091d2"></i>
<i style="left:340px;top:720px;height:40px;background:#5f8cbe"></i>
<i style="left:382px;top:720px;height:40px;background:#6e8caf"></i>
<i style="left:424px;top:720px;height:40px;background:#828c9b"></i>
<i style="left:466px;top:720px;height:40px;background:#3c82d7"></i>
<i style="left:508px;top:720px;height:40px;background:#3069b4"></i>
<i style="left:550px;top:720px;height:40px;background:#23558e"></i>
<i style="left:592px;top:720px;height:40px;background:#193c64"></i>
<i style="left:634px;top:720px;height:40px;background:#081a34"></i>
<i style="left:4px;top:762px;height:10px;background:#235af5"></i>
<i style="left:46px;top:762px;height:10px;background:#4b78f5"></i>
<i style="left:88px;top:762px;height:10px;background:#6e96f5"></i>
<i style="left:130px;top:762px;height:10px;background:#96aff5"></i>
<i style="left:172px;top:762px;height:10px;background:#becdfa"></i>
<i style="left:214px;top:762px;height:10px;background:#e1e6fc"></i>
<i style="left:256px;top:762px;height:10px;background:#3764e1"></i>
<i style="left:298px;top:762px;height:10px;background:#4669d2"></i>
<i style="left:340px;top:762px;height:10px;background:#5a73be"></i>
<i style="left:382px;top:762px;height:10px;background:#6978af"></i>
<i style="left:424px;top:762px;height:10px;background:#7d829b"></i>
<i style="left:466px;top:762px;height:10px;background:#2850d7"></i>
<i style="left:508px;top:762px;height:10px;background:#2341b4"></i>
<i style="left:550px;top:762px;height:10px;background:#1c3291"></i>
<i style="left:592px;top:762px;height:10px;background:#142364"></i>
<i style="left:634px;top:762px;height:10px;background:#000c37"></i></div>
<div class="a" style="left:1224.0px;top:424.0px;width:60.0px;height:60.0px;border:6px solid #8a7a48;box-sizing:border-box;background:#f19b95"></div>
<div class="a" style="left:1245.6px;top:493.3px;width:252.9px;height:122.9px;background:linear-gradient(20deg,#4a4232,#4d4231 50%,#523c26);box-shadow:inset 0 0 0 1px rgba(150,140,115,.35), 0 1px 7px rgba(0,0,0,.35)"></div>
<div class="t" style="left:1257.7px;top:502.2px;font-size:22.0px;line-height:22.0px;color:#ececec;font-weight:normal;letter-spacing:0.15px;">Red 4</div>
<div class="t" style="left:1257.7px;top:529.7px;font-size:22.0px;line-height:22.0px;color:#ececec;font-weight:normal;letter-spacing:0.16px;">RGB: ( 255, 127, 127 )</div>
<div class="t" style="left:1257.7px;top:557.3px;font-size:22.0px;line-height:22.0px;color:#ececec;font-weight:normal;letter-spacing:0.57px;">CMYK: ( 0, 50, 50, 0 )</div>
<div class="t" style="left:1257.7px;top:585.6px;font-size:22.0px;line-height:22.0px;color:#ececec;font-weight:normal;letter-spacing:0.49px;">HSV: ( 0, 50, 100 )</div>
</body></html>
